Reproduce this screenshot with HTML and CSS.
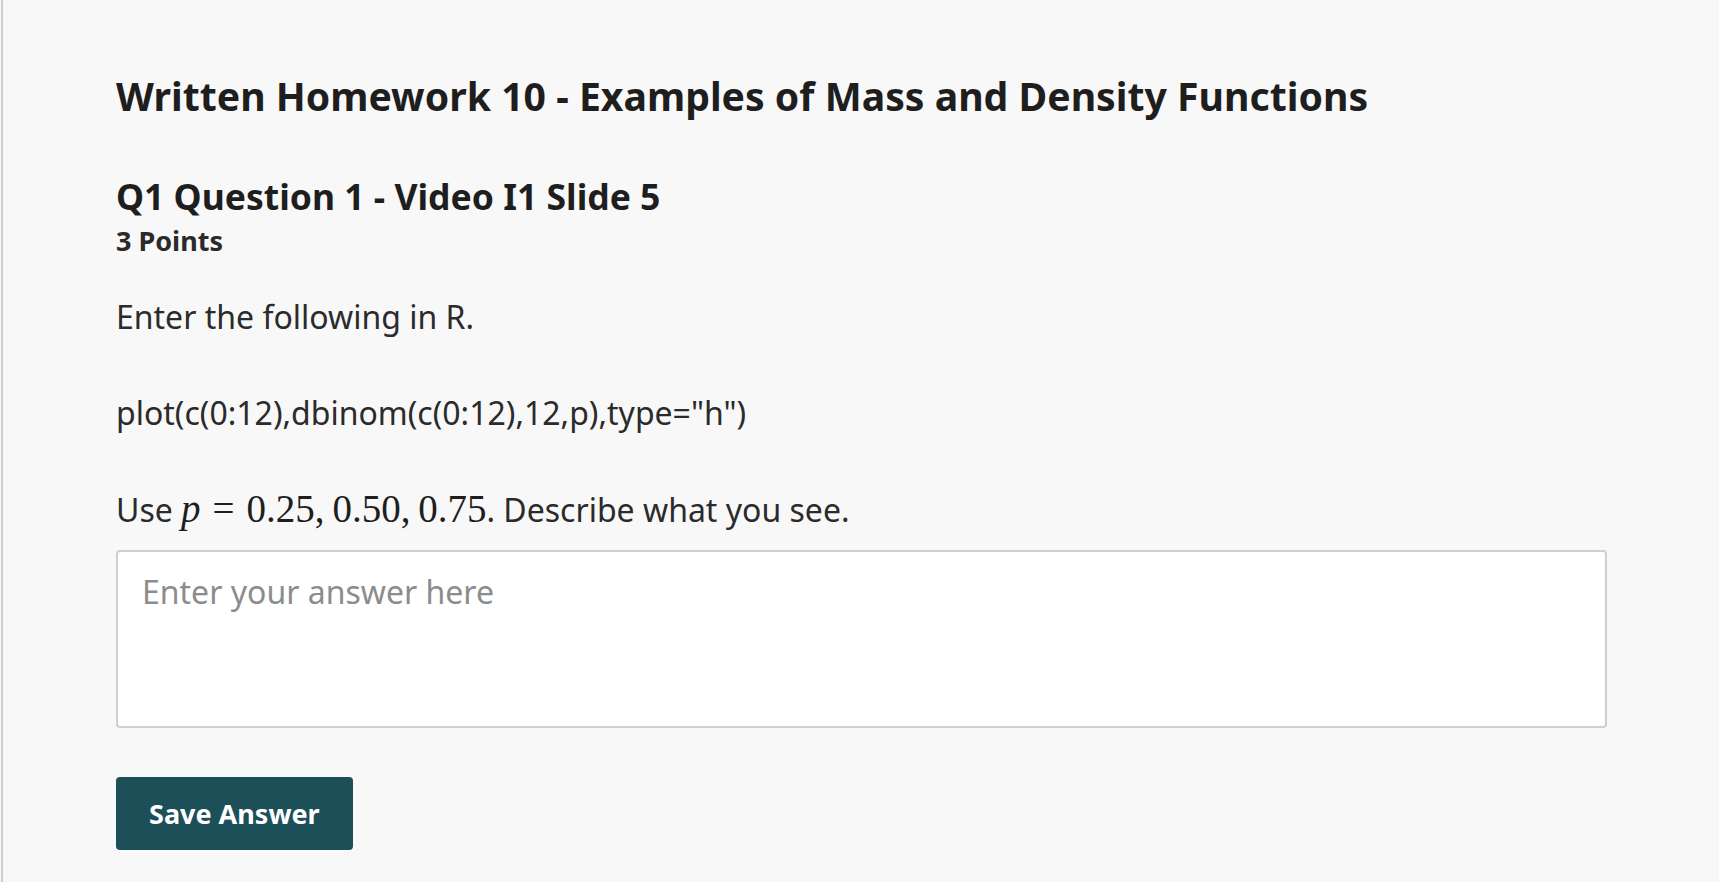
FILE: index.html
```html
<!DOCTYPE html>
<html lang="en">
<head>
<meta charset="utf-8">
<title>Written Homework 10</title>
<link rel="stylesheet" href="styles.css">
</head>
<body>
<main class="page">
  <h1 class="title">Written Homework 10 - Examples of Mass and Density Functions</h1>
  <section class="question">
    <h2 class="q-title">Q1 Question 1 - Video I1 Slide 5</h2>
    <div class="q-points">3 Points</div>
    <div class="q-body">
      <p>Enter the following in R.</p>
      <p>plot(c(0:12),dbinom(c(0:12),12,p),type="h")</p>
      <p>Use <span class="math"><i class="mvar">p</i><span class="rel">=</span>0.25,&thinsp;0.50,&thinsp;0.75</span>. Describe what you see.</p>
    </div>
    <textarea class="answer" placeholder="Enter your answer here"></textarea>
    <div class="actions">
      <button class="btn" type="button">Save Answer</button>
    </div>
  </section>
</main>
</body>
</html>
```

FILE: styles.css
```css
html, body {
  margin: 0;
  padding: 0;
}
body {
  background: #f8f8f8;
  font-family: "Noto Sans", "Open Sans", sans-serif;
  color: #1e1e1e;
}
.page {
  margin-left: 1px;
  border-left: 2px solid #cdcdcd;
  min-height: 100vh;
  box-sizing: border-box;
  padding: 70px 112px 0 113px;
}
.title {
  margin: 0;
  font-size: 39.2px;
  font-weight: 700;
  line-height: 52px;
}
.question {
  margin-top: 51px;
}
.q-title {
  margin: 0;
  font-size: 35.5px;
  font-weight: 700;
  line-height: 46px;
}
.q-points {
  margin-top: 4px;
  font-size: 27px;
  font-weight: 700;
  line-height: 36px;
  color: #2a2a2a;
}
.q-body {
  font-size: 32px;
  line-height: 44px;
  color: #2b2b2b;
  margin-top: 36px;
}
.q-body p {
  margin: 0 0 52px;
}
.q-body p:last-child {
  margin-bottom: 0;
}
.math {
  font-family: "Liberation Serif", "DejaVu Serif", serif;
  font-size: 39px;
  color: #1e1e1e;
}
.mvar {
  font-style: italic;
}
.rel {
  margin: 0 12px;
}
.answer {
  display: block;
  box-sizing: border-box;
  width: 100%;
  height: 178px;
  margin-top: 18px;
  padding: 18px 24px;
  border: 2px solid #cfcfcf;
  border-radius: 4px;
  background: #fff;
  font-family: "Noto Sans", "Open Sans", sans-serif;
  font-size: 32px;
  line-height: 44px;
  color: #222;
  resize: none;
  outline: none;
}
.answer::placeholder {
  color: #8c8c8c;
}
.actions {
  margin-top: 49px;
}
.btn {
  display: inline-flex;
  align-items: center;
  justify-content: center;
  height: 73px;
  padding: 0 33px;
  border: none;
  border-radius: 4px;
  background: #1c4f58;
  color: #fff;
  font-family: "Noto Sans", "Open Sans", sans-serif;
  font-size: 27px;
  font-weight: 700;
  cursor: pointer;
}
```
